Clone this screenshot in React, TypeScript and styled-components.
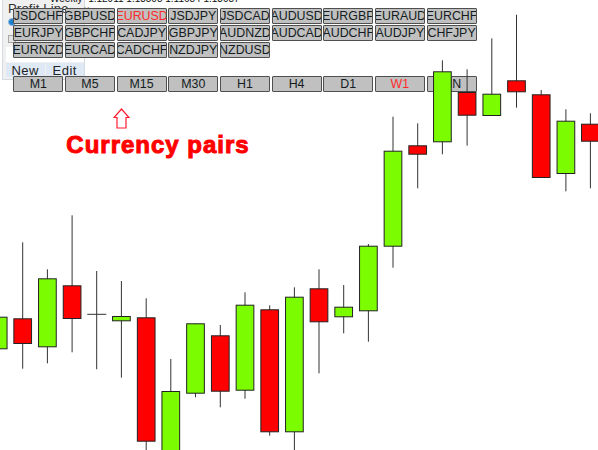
import React from 'react';
import styled, { createGlobalStyle } from 'styled-components';

const GlobalStyle = createGlobalStyle`
  html, body {
    margin: 0;
    padding: 0;
    background: #fff;
  }
`;

const pairs = [
  'JSDCHF', 'GBPUSD', 'EURUSD', 'JSDJPY', 'JSDCAD', 'AUDUSD', 'EURGBP', 'EURAUD', 'EURCHF',
  'EURJPY', 'GBPCHF', 'CADJPY', 'GBPJPY', 'AUDNZD', 'AUDCAD', 'AUDCHF', 'AUDJPY', 'CHFJPY',
  'EURNZD', 'EURCAD', 'CADCHF', 'NZDJPY', 'NZDUSD',
];

const periods = ['M1', 'M5', 'M15', 'M30', 'H1', 'H4', 'D1', 'W1', 'MN'];

interface Candle {
  x: number;
  top: number;
  bottom: number;
  high: number;
  low: number;
  up: boolean;
}

// measured off the chart: wick x, body top/bottom, wick high/low
const candles: Candle[] = [
  { x: -1.8, top: 316.7, bottom: 349.3, high: 316.7, low: 349.3, up: true },
  { x: 22.7, top: 318.3, bottom: 344, high: 242.3, low: 368.7, up: false },
  { x: 47.4, top: 278.3, bottom: 347.3, high: 269.3, low: 363.3, up: true },
  { x: 72.1, top: 285.3, bottom: 319, high: 215.3, low: 352.3, up: false },
  { x: 121.4, top: 316, bottom: 321.3, high: 281, low: 377.7, up: true },
  { x: 146.2, top: 317.3, bottom: 441.7, high: 298.3, low: 455, up: false },
  { x: 170.8, top: 391, bottom: 458, high: 359, low: 458, up: true },
  { x: 195.5, top: 323.3, bottom: 393.7, high: 323.3, low: 397.3, up: true },
  { x: 220.3, top: 335.3, bottom: 391.7, high: 325, low: 407.3, up: false },
  { x: 245, top: 304.7, bottom: 390.7, high: 292.3, low: 398.7, up: true },
  { x: 269.7, top: 309.3, bottom: 432.3, high: 305.3, low: 435.7, up: false },
  { x: 294.4, top: 296.7, bottom: 432.3, high: 287.3, low: 455, up: true },
  { x: 319, top: 288.3, bottom: 322.3, high: 269.3, low: 373.3, up: false },
  { x: 343.7, top: 306.7, bottom: 317.3, high: 285, low: 333.3, up: true },
  { x: 368.4, top: 245.7, bottom: 311.3, high: 244, low: 341.7, up: true },
  { x: 393, top: 150.7, bottom: 246.7, high: 116.7, low: 267.7, up: true },
  { x: 417.7, top: 145.3, bottom: 154.7, high: 123.3, low: 188.3, up: false },
  { x: 442.4, top: 71.3, bottom: 142.3, high: 60.3, low: 154.3, up: true },
  { x: 467.1, top: 92, bottom: 115.7, high: 69.3, low: 145.7, up: false },
  { x: 491.8, top: 93.7, bottom: 116, high: 38.3, low: 116, up: true },
  { x: 516.5, top: 80.3, bottom: 92.3, high: 14.7, low: 107.7, up: false },
  { x: 541.2, top: 94.3, bottom: 178, high: 90, low: 178, up: false },
  { x: 565.9, top: 120.7, bottom: 174, high: 109.3, low: 191.3, up: true },
  { x: 590.4, top: 123.7, bottom: 141.7, high: 113.3, low: 188.3, up: false },
];

const Chart = () => (
  <ChartSvg viewBox="0 0 598 450" width="598" height="450">
    {/* the doji has no body, only a cross */}
    <line x1="96.7" x2="96.7" y1="271" y2="369.3" stroke="#333" />
    <line x1="87.3" x2="106.3" y1="314.3" y2="314.3" stroke="#333" />
    {candles.map((c) => (
      <g key={c.x}>
        <line x1={c.x} x2={c.x} y1={c.high} y2={c.low} stroke="#333" />
        <rect
          x={c.x - 8.85}
          y={c.top + 0.5}
          width={17.7}
          height={c.bottom - c.top - 1}
          fill={c.up ? '#7cfc00' : '#ff0000'}
          stroke="#222"
        />
      </g>
    ))}
  </ChartSvg>
);

function App() {
  return (
    <>
      <GlobalStyle />
      <Page>
        <PanelLayer>
          <Panel>
            <PanelTitle>
              Profit Line <span>×</span>
            </PanelTitle>
            <RadioRow>
              <Radio />
            </RadioRow>
            <CheckRow>
              <Check />
            </CheckRow>
            <NameInput />
            <Tabs>
              <Tab>New</Tab>
              <Tab>Edit</Tab>
            </Tabs>
          </Panel>
        </PanelLayer>

        <QuoteLine>Weekly&nbsp; 1.12911 1.13508 1.11684 1.13087</QuoteLine>

        <Toolbar>
          <ButtonGrid>
            {pairs.map((p) => (
              <ChartButton key={p} $active={p === 'EURUSD'}>
                <span>{p}</span>
              </ChartButton>
            ))}
          </ButtonGrid>
          <PeriodGrid>
            {periods.map((p) => (
              <ChartButton key={p} $active={p === 'W1'}>
                <span>{p}</span>
              </ChartButton>
            ))}
          </PeriodGrid>
          <Callout>
            <ArrowIcon viewBox="0 0 17 21" width="17" height="21">
              <path
                d="M8.5 1 L16 9.5 L13 9.5 L13 20 L4 20 L4 9.5 L1 9.5 Z"
                fill="#fff"
                stroke="#ff1a2e"
                strokeWidth="1.2"
              />
            </ArrowIcon>
            <CalloutText>Currency pairs</CalloutText>
          </Callout>
        </Toolbar>

        <Chart />
      </Page>
    </>
  );
}

const Page = styled.div`
  display: grid;
  width: 598px;
  height: 450px;
  overflow: hidden;
  background: #fff;
  font-family: 'Liberation Sans', Arial, sans-serif;

  /* panel, quote line, buttons and chart are stacked on one cell */
  > * {
    grid-area: 1 / 1;
    min-width: 0;
  }
`;

const PanelLayer = styled.div`
  padding-left: 2px;
`;

const Panel = styled.div`
  box-sizing: border-box;
  width: 83px;
  height: 80px;
  padding: 2px 0 0 3px;
  background: #f0f0f0;
  border: 1px solid #d5dbe3;
  border-top: none;
  color: #333;
`;

const PanelTitle = styled.div`
  height: 14px;
  padding-left: 2px;
  font-size: 13px;
  line-height: 14px;
  letter-spacing: 0.2px;
  white-space: nowrap;

  span {
    margin-left: 11px;
    color: #888;
    font-size: 11px;
  }
`;

const RadioRow = styled.div`
  height: 11px;
  padding: 2px 0 0 2px;
`;

const Radio = styled.div`
  box-sizing: border-box;
  width: 8px;
  height: 8px;
  border-radius: 50%;
  background: #1c7fd0;
  border: 1px solid #8ab4d8;
`;

const CheckRow = styled.div`
  height: 17px;
  padding: 6px 0 0 2px;
  box-sizing: border-box;
`;

const Check = styled.div`
  box-sizing: border-box;
  width: 8px;
  height: 8px;
  background: #e4e4e4;
  border: 1px solid #a8a8a8;
`;

const NameInput = styled.div`
  height: 15px;
  margin-top: 1px;
  background: #fff;
`;

const Tabs = styled.div`
  display: flex;
  gap: 1px;
  margin-top: 1px;
`;

const Tab = styled.div`
  flex: 1;
  height: 14px;
  background: #dfe8f5;
  color: #222;
  font-size: 13px;
  line-height: 15px;
  text-align: center;
  letter-spacing: 0.5px;
`;

const QuoteLine = styled.div`
  height: 10px;
  margin: -6px 0 0 50px;
  color: #111;
  font-size: 10px;
  line-height: 10px;
  white-space: pre;
`;

const Toolbar = styled.div`
  padding: 8px 0 0 13.3px;
`;

const ButtonGrid = styled.div`
  display: grid;
  grid-template-columns: repeat(9, 50px);
  column-gap: 1.67px;
  row-gap: 1px;
`;

const PeriodGrid = styled(ButtonGrid)`
  margin-top: 18px;
`;

const ChartButton = styled.div<{ $active?: boolean }>`
  box-sizing: border-box;
  display: flex;
  justify-content: center;
  align-items: center;
  height: 16px;
  overflow: hidden;
  background: #c0c0c0;
  border: 1.5px solid #4f4f4f;
  border-radius: 1px;
  color: ${(props) => (props.$active ? '#ff2a2a' : '#141c22')};
  font-size: 12.4px;
  line-height: 14px;
  white-space: nowrap;
`;

const Callout = styled.div`
  display: flex;
  flex-direction: column;
`;

const ArrowIcon = styled.svg`
  display: block;
  margin: 16px 0 0 99.5px;
`;

const CalloutText = styled.div`
  margin: 2px 0 0 53px;
  color: #ff0000;
  font-size: 24px;
  font-weight: 700;
  line-height: 27px;
  letter-spacing: 1px;
  white-space: nowrap;
  -webkit-text-stroke: 1px #ff0000;
`;

const ChartSvg = styled.svg`
  display: block;
  pointer-events: none;
`;

export default App;
